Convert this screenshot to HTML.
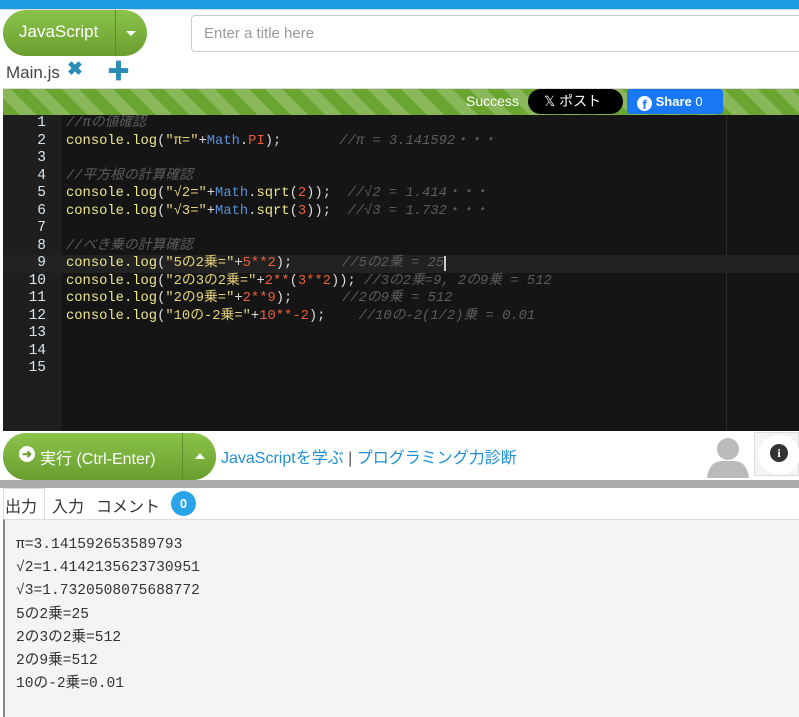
<!DOCTYPE html>
<html><head><meta charset="utf-8"><style>
*{margin:0;padding:0;box-sizing:border-box}
body{width:799px;height:717px;overflow:hidden;background:#fff;font-family:"Liberation Sans","Noto Sans CJK JP",sans-serif;position:relative}
.abs{position:absolute}
.mono{font-family:"Liberation Mono","Noto Sans CJK JP",monospace}
.green{background:linear-gradient(#8bc34a,#6a9e2f);color:#fff}
#code div{height:17.5px;line-height:17.5px;white-space:pre}
.k{color:#f0e68c}.s{color:#e6d27a}.b{color:#5b8fd6}.n{color:#e8603a}.c{color:#5c5c5c;font-style:italic}.w{color:#ddd}
#out div{height:23.2px;white-space:pre}
</style></head><body>
<div class="abs" style="left:0;top:0;width:799px;height:9px;background:#1e9be0"></div>
<div class="abs" style="left:0;top:9px;width:799px;height:1px;background:#ddd"></div>
<div class="abs green" style="left:3px;top:10px;width:144px;height:46px;border-radius:23px"></div>
<div class="abs" style="left:115px;top:10px;width:1px;height:46px;background:#5d8c2a"></div>
<div class="abs" style="left:19px;top:22px;color:#fff;font-size:17px">JavaScript</div>
<div class="abs" style="left:126px;top:31px;border-left:5px solid transparent;border-right:5px solid transparent;border-top:5px solid #fff"></div>
<div class="abs" style="left:191px;top:15px;width:620px;height:37px;border:1px solid #ccc;border-radius:4px;color:#999;font-size:15px;padding:9px 12px">Enter a title here</div>
<div class="abs" style="left:6px;top:63px;font-size:17px;color:#444">Main.js</div>
<div class="abs" style="left:67px;top:60px;font-size:19px;color:#2a8db8;font-weight:bold;line-height:20px">✖</div>
<div class="abs" style="left:107px;top:59px;font-size:23px;color:#2a8db8;font-weight:bold;line-height:24px">✚</div>
<div class="abs" style="left:3px;top:88px;width:796px;height:27px;background:repeating-linear-gradient(45deg,#6aa532 0 12px,#8ab75a 12px 24px);border-top:1px solid #ddd"></div>
<div class="abs" style="left:466px;top:93px;color:#fff;font-size:14px">Success</div>
<div class="abs" style="left:528px;top:89px;width:95px;height:25px;background:#000;border-radius:13px;color:#fff;font-size:14px;line-height:24px;padding-left:16px">𝕏 ポスト</div>
<div class="abs" style="left:627px;top:89px;width:96px;height:25px;background:#1877f2;border-radius:3px;color:#fff;font-size:13px;line-height:25px;padding-left:10px"><span style="display:inline-block;width:15px;height:15px;border-radius:50%;background:#fff;color:#1877f2;font-size:13px;line-height:17px;text-align:center;font-weight:bold;vertical-align:-3px">f</span> <b>Share</b> 0</div>
<div class="abs" style="left:3px;top:115px;width:59px;height:316px;background:#1e1e1e"></div>
<div class="abs" style="left:62px;top:115px;width:737px;height:316px;background:#151515"></div>
<div class="abs" style="left:726px;top:115px;width:1px;height:316px;background:#2a2a2a"></div>
<div class="abs" style="left:3px;top:255px;width:796px;height:17.5px;background:#222"></div>
<div class="abs mono" style="left:3px;top:115px;width:43px;text-align:right;font-size:14.5px;color:#d8e4ee;line-height:17.5px">1<br>2<br>3<br>4<br>5<br>6<br>7<br>8<br>9<br>10<br>11<br>12<br>13<br>14<br>15</div>
<div id="code" class="abs mono" style="left:66px;top:115px;font-size:13.8px">
<div class="c">//πの値確認</div>
<div><span class="k">console.log</span><span class="w">(</span><span class="s">"π="</span><span class="w">+</span><span class="b">Math</span><span class="w">.</span><span class="n">PI</span><span class="w">);</span>       <span class="c">//π = 3.141592・・・</span></div>
<div> </div>
<div class="c">//平方根の計算確認</div>
<div><span class="k">console.log</span><span class="w">(</span><span class="s">"√2="</span><span class="w">+</span><span class="b">Math</span><span class="w">.</span><span class="k">sqrt</span><span class="w">(</span><span class="n">2</span><span class="w">));</span>  <span class="c">//√2 = 1.414・・・</span></div>
<div><span class="k">console.log</span><span class="w">(</span><span class="s">"√3="</span><span class="w">+</span><span class="b">Math</span><span class="w">.</span><span class="k">sqrt</span><span class="w">(</span><span class="n">3</span><span class="w">));</span>  <span class="c">//√3 = 1.732・・・</span></div>
<div> </div>
<div class="c">//べき乗の計算確認</div>
<div><span class="k">console.log</span><span class="w">(</span><span class="s">"5の2乗="</span><span class="w">+</span><span class="n">5**2</span><span class="w">);</span>      <span class="c">//5の2乗 = 25</span><span style="border-left:2px solid #ccc"></span></div>
<div><span class="k">console.log</span><span class="w">(</span><span class="s">"2の3の2乗="</span><span class="w">+</span><span class="n">2**</span><span class="w">(</span><span class="n">3**2</span><span class="w">));</span> <span class="c">//3の2乗=9, 2の9乗 = 512</span></div>
<div><span class="k">console.log</span><span class="w">(</span><span class="s">"2の9乗="</span><span class="w">+</span><span class="n">2**9</span><span class="w">);</span>      <span class="c">//2の9乗 = 512</span></div>
<div><span class="k">console.log</span><span class="w">(</span><span class="s">"10の-2乗="</span><span class="w">+</span><span class="n">10**-2</span><span class="w">);</span>    <span class="c">//10の-2(1/2)乗 = 0.01</span></div>
</div>
<div class="abs green" style="left:3px;top:433px;width:213px;height:47px;border-radius:23px"></div>
<div class="abs" style="left:182px;top:433px;width:1px;height:47px;background:#5d8c2a"></div>
<div class="abs" style="left:19px;top:446px;width:16px;height:16px;border-radius:50%;background:#fff;color:#6a9e2f;font-size:12px;line-height:16px;text-align:center;font-weight:bold">➜</div>
<div class="abs" style="left:40px;top:445px;color:#fff;font-size:16px">実行 (Ctrl-Enter)</div>
<div class="abs" style="left:195px;top:453px;border-left:5px solid transparent;border-right:5px solid transparent;border-bottom:6px solid #fff"></div>
<div class="abs" style="left:221px;top:444px;font-size:16px;color:#1e8fd6">JavaScriptを学ぶ <span style="color:#555">|</span> プログラミング力診断</div>
<svg class="abs" style="left:705px;top:434px" width="46" height="44"><circle cx="23" cy="15" r="11" fill="#bbb"/><path d="M2 44 Q4 28 16 27 L30 27 Q42 28 44 44Z" fill="#bbb"/></svg>
<div class="abs" style="left:754px;top:432px;width:45px;height:44px;background:#f4f4f4;border:1px solid #ddd"></div>
<div class="abs" style="left:758px;top:435px;width:42px;height:40px;border-radius:50%;background:#fff"></div>
<div class="abs" style="left:770px;top:444px;width:18px;height:18px;border-radius:50%;background:#333;color:#fff;font-size:12px;text-align:center;line-height:18px;font-weight:bold;font-family:'Liberation Serif',serif">i</div>
<div class="abs" style="left:0;top:480px;width:799px;height:8px;background:#aaa"></div>
<div class="abs" style="left:3px;top:488px;width:42px;height:32px;border:1px solid #ddd;border-bottom:none;background:#fff"></div>
<div class="abs" style="left:5px;top:493px;font-size:16px;color:#333">出力</div>
<div class="abs" style="left:52px;top:493px;font-size:16px;color:#333">入力</div>
<div class="abs" style="left:96px;top:493px;font-size:16px;color:#333">コメント</div>
<div class="abs" style="left:171px;top:491px;width:25px;height:25px;border-radius:50%;background:#2aa4e8;color:#fff;font-size:13px;font-weight:bold;text-align:center;line-height:25px">0</div>
<div class="abs" style="left:3px;top:519px;width:796px;height:198px;background:#f4f4f4;border-top:1px solid #ddd;border-left:2px solid #888"></div>
<div id="out" class="abs mono" style="left:16px;top:534px;font-size:14.6px;color:#333;line-height:23px">
<div>π=3.141592653589793</div><div>√2=1.4142135623730951</div><div>√3=1.7320508075688772</div><div>5の2乗=25</div><div>2の3の2乗=512</div><div>2の9乗=512</div><div>10の-2乗=0.01</div>
</div>
</body></html>
